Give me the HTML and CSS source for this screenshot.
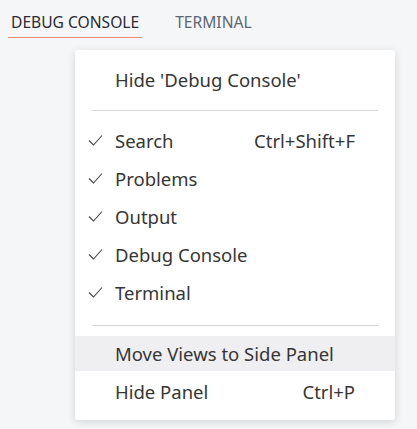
FILE: index.html
```html
<!DOCTYPE html>
<html>
<head>
<meta charset="utf-8">
<link rel="stylesheet" href="styles.css">
</head>
<body>
<div class="tabs">
  <div class="tab active">DEBUG CONSOLE</div>
  <div class="tab">TERMINAL</div>
</div>
<div class="menu">
  <div class="item"><span class="check"></span><span class="label">Hide 'Debug Console'</span></div>
  <div class="sep"></div>
  <div class="item"><span class="check"><svg width="15" height="13" viewBox="0 0 15 13"><path d="M1 6.5 L5.5 11 L14 1.5" fill="none" stroke="#444" stroke-width="1.1"/></svg></span><span class="label">Search</span><span class="key">Ctrl+Shift+F</span></div>
  <div class="item"><span class="check"><svg width="15" height="13" viewBox="0 0 15 13"><path d="M1 6.5 L5.5 11 L14 1.5" fill="none" stroke="#444" stroke-width="1.1"/></svg></span><span class="label">Problems</span></div>
  <div class="item"><span class="check"><svg width="15" height="13" viewBox="0 0 15 13"><path d="M1 6.5 L5.5 11 L14 1.5" fill="none" stroke="#444" stroke-width="1.1"/></svg></span><span class="label">Output</span></div>
  <div class="item"><span class="check"><svg width="15" height="13" viewBox="0 0 15 13"><path d="M1 6.5 L5.5 11 L14 1.5" fill="none" stroke="#444" stroke-width="1.1"/></svg></span><span class="label">Debug Console</span></div>
  <div class="item"><span class="check"><svg width="15" height="13" viewBox="0 0 15 13"><path d="M1 6.5 L5.5 11 L14 1.5" fill="none" stroke="#444" stroke-width="1.1"/></svg></span><span class="label">Terminal</span></div>
  <div class="sep low"></div>
  <div class="item hover"><span class="check"></span><span class="label">Move Views to Side Panel</span></div>
  <div class="item"><span class="check"></span><span class="label">Hide Panel</span><span class="key">Ctrl+P</span></div>
</div>
</body>
</html>
```
FILE: styles.css
```css
html, body {
  margin: 0;
  padding: 0;
  background: #f5f6f8;
  width: 417px;
  height: 429px;
  overflow: hidden;
  font-family: "Noto Sans", "Open Sans", sans-serif;
}
.tabs {
  display: flex;
  gap: 30px;
  padding: 9px 0 0 8px;
  height: 41px;
  box-sizing: border-box;
}
.tab {
  font-size: 15.6px;
  color: #5e6672;
  padding: 0 3px;
  height: 29px;
  line-height: 26px;
  box-sizing: border-box;
}
.tab.active {
  color: #2b2b33;
  border-bottom: 1px solid #ef8a70;
}
.menu {
  display: flex;
  flex-direction: column;
  margin: 9px 0 0 75px;
  width: 320px;
  height: 370px;
  box-sizing: border-box;
  background: #fff;
  border-radius: 3px;
  box-shadow: 0 2px 8px rgba(0,0,0,0.14);
  padding: 10px 0 8px;
  color: #363636;
  font-size: 18.5px;
}
.item {
  display: flex;
  align-items: center;
  height: 35px;
  flex: none;
  margin: 2px 0 1px;
  padding: 0 40px 0 13px;
}
.item.hover {
  background: #efeff1;
}
.check {
  width: 27px;
  display: flex;
  align-items: center;
  flex: none;
}
.check svg { display: block; }
.label { flex: 1; }
.key { flex: none; }
.sep {
  height: 23px;
  flex: none;
  box-sizing: border-box;
  padding: 12px 17px 0;
}
.sep.low {
  padding-top: 14px;
}
.sep::before {
  content: "";
  display: block;
  height: 1px;
  background: #d6d6d6;
}
```
